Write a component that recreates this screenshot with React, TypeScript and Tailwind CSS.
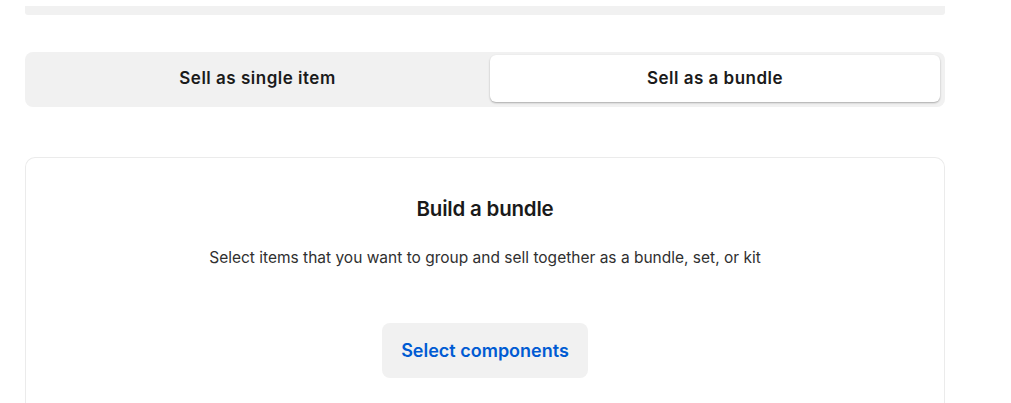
export default function App() {
  return (
    <div className="min-h-[403px] bg-white font-['Inter',sans-serif] text-[#1a1a1a]">
      <div className="ml-[25px] w-[920px] pt-[6px]">
        {/* bottom of previous card */}
        <div className="h-[9px] rounded-b-[3px] bg-[#f1f1f1]" />

        {/* Sale type toggle */}
        <div className="mt-[37px] flex h-[55px] gap-[4px] rounded-[8px] bg-[#f1f1f1] pt-[3px] pr-[5px] pb-[5px] pl-[4px]">
          <button className="flex flex-1 items-center justify-center rounded-[6px] text-[17px] font-semibold tracking-[0.5px] text-[#1a1a1a]">
            Sell as single item
          </button>
          <button className="flex w-[450px] items-center justify-center rounded-[6px] bg-white text-[17px] font-semibold tracking-[0.5px] text-[#1a1a1a] shadow-[0_1px_2px_rgba(0,0,0,0.3)]">
            Sell as a bundle
          </button>
        </div>

        {/* Build a bundle card */}
        <div className="mt-[50px] flex flex-col items-center rounded-t-[10px] border border-b-0 border-[#ebebeb] pt-[37px] pb-[40px]">
          <h2 className="text-[20.5px] font-semibold leading-[28px] tracking-[-0.2px]">Build a bundle</h2>
          <p className="mt-[25px] text-[15.5px] leading-[20px] text-[#303030]">
            Select items that you want to group and sell together as a bundle, set, or kit
          </p>
          <button className="mt-[55px] h-[55px] w-[206px] rounded-[8px] bg-[#f1f1f1] text-[18px] font-semibold text-[#005bd3]">
            Select components
          </button>
        </div>
      </div>
    </div>
  );
}
